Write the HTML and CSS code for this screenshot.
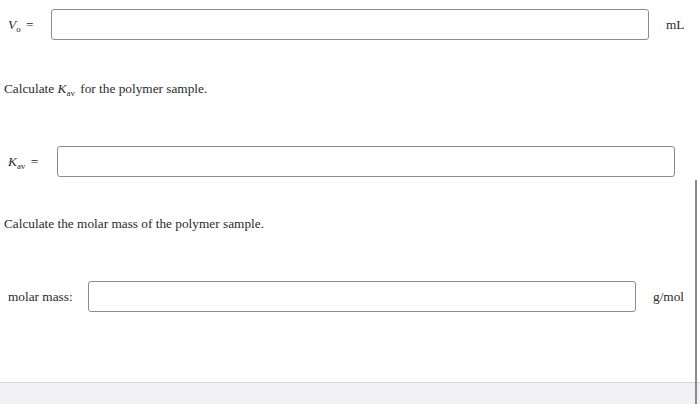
FILE: index.html
```html
<!DOCTYPE html>
<html lang="en">
<head>
    <meta charset="UTF-8">
    <meta name="viewport" content="width=device-width, initial-scale=1.0">
    <title>Polymer sample</title>
    <link rel="stylesheet" href="styles.css">
</head>
<body>

<div class="question">
    <div class="answer-row row-vo">
        <label class="answer-label" for="vo"><i>V</i><sub>o</sub> =</label>
        <input type="text" id="vo" class="answer-input">
        <span class="unit">mL</span>
    </div>

    <p class="prompt prompt-kav">Calculate <i>K</i><sub>av</sub> for the polymer sample.</p>

    <div class="answer-row row-kav">
        <label class="answer-label" for="kav"><i>K</i><sub>av</sub> =</label>
        <input type="text" id="kav" class="answer-input">
    </div>

    <p class="prompt prompt-mass">Calculate the molar mass of the polymer sample.</p>

    <div class="answer-row row-mass">
        <label class="answer-label" for="mass">molar mass:</label>
        <input type="text" id="mass" class="answer-input">
        <span class="unit">g/mol</span>
    </div>
</div>

<div class="footer-bar"></div>
<div class="scroll-thumb"></div>

</body>
</html>
```

FILE: styles.css
```css
body {
    font-family: "Liberation Serif", "Times New Roman", serif;
    font-size: 13.3px;
    color: #2a2a2a;
    background-color: #fff;
    margin: 0;
    overflow: hidden;
}

.question {
    padding-top: 9px;
}

.answer-row {
    display: flex;
    align-items: center;
    height: 31px;
    padding-left: 8px;
}

.answer-label {
    flex: none;
    white-space: nowrap;
    font-family: "Liberation Serif", "Times New Roman", serif;
}

.answer-label sub,
.prompt sub {
    font-size: 9px;
    line-height: 0;
    vertical-align: -3px;
    margin-right: 2px;
}

.answer-input {
    flex: none;
    height: 31px;
    box-sizing: border-box;
    border: 1px solid #8c8c8c;
    border-radius: 3px;
    background: #fff;
    margin: 0;
    padding: 0 6px;
}

.unit {
    margin-left: 17px;
}

.row-vo .answer-label { width: 43px; }
.row-vo .answer-input { width: 598px; }

.row-kav { margin-top: 49px; }
.row-kav .answer-label { width: 49px; }
.row-kav .answer-input { width: 618px; }

.row-mass { margin-top: 49px; }
.row-mass .answer-label { width: 80px; }
.row-mass .answer-input { width: 548px; }

.prompt {
    margin: 0;
    padding-left: 4px;
    line-height: 16px;
}

.prompt-kav { margin-top: 41px; }
.prompt-mass { margin-top: 39px; }

.footer-bar {
    margin-top: 70px;
    height: 22px;
    border-top: 1px solid #d6d6d6;
    background-color: #f2f2f4;
}

.scroll-thumb {
    position: fixed;
    left: 695px;
    top: 180px;
    bottom: 0;
    width: 2px;
    background-color: #8a8a8a;
}
```
